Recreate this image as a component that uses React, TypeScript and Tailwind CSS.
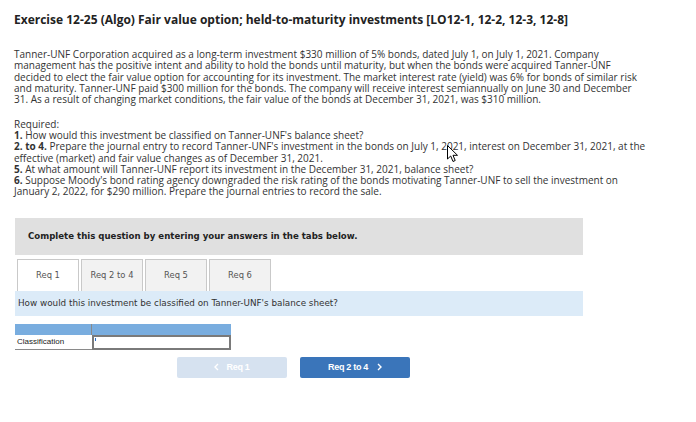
import React from "react";

const body = "font-['Open_Sans',_'Liberation_Sans',_sans-serif] text-[#333]";
const verdana = "font-['DejaVu_Sans',_Verdana,_sans-serif]";

const tabs = ["Req 1", "Req 2 to 4", "Req 5", "Req 6"];

export default function App() {
  return (
    <div className="relative h-[422px] w-[696px] overflow-hidden bg-white">
      <div className={`${body} px-[14px] pt-[13px]`}>
        <h1 className="text-[12px] font-bold leading-[14px] text-[#222]">
          Exercise 12-25 (Algo) Fair value option; held-to-maturity investments [LO12-1, 12-2, 12-3, 12-8]
        </h1>
        <p className="mt-[22px] text-[10px] leading-[11.25px]">
          Tanner-UNF Corporation acquired as a long-term investment $330 million of 5% bonds, dated July 1, on July 1, 2021. Company
          <br />
          management has the positive intent and ability to hold the bonds until maturity, but when the bonds were acquired Tanner-UNF
          <br />
          decided to elect the fair value option for accounting for its investment. The market interest rate (yield) was 6% for bonds of similar risk
          <br />
          and maturity. Tanner-UNF paid $300 million for the bonds. The company will receive interest semiannually on June 30 and December
          <br />
          31. As a result of changing market conditions, the fair value of the bonds at December 31, 2021, was $310 million.
        </p>
        <div className="mt-[14px] text-[10px] leading-[11.1px]">
          <p>Required:</p>
          <p>
            <b>1.</b> How would this investment be classified on Tanner-UNF's balance sheet?
          </p>
          <p>
            <b>2. to 4.</b> Prepare the journal entry to record Tanner-UNF's investment in the bonds on July 1, 2021, interest on December 31, 2021, at the
            <br />
            effective (market) and fair value changes as of December 31, 2021.
          </p>
          <p>
            <b>5.</b> At what amount will Tanner-UNF report its investment in the December 31, 2021, balance sheet?
          </p>
          <p>
            <b>6.</b> Suppose Moody's bond rating agency downgraded the risk rating of the bonds motivating Tanner-UNF to sell the investment on
            <br />
            January 2, 2022, for $290 million. Prepare the journal entries to record the sale.
          </p>
        </div>
      </div>

      <div className={`${verdana} ml-[15px] mt-[21px] w-[568px]`}>
        <div className="flex h-[37px] items-center bg-[#e0e0e0] pl-[13px]">
          <span className="text-[8.6px] font-bold text-[#222]">
            Complete this question by entering your answers in the tabs below.
          </span>
        </div>

        <div className="mt-[4px] flex gap-[2px] pl-[2px]">
          {tabs.map((t, i) => (
            <div
              key={t}
              className={`flex h-[32px] w-[62px] items-center justify-center border border-b-0 border-[#c9c9c9] text-[8.4px] text-[#555] ${
                i === 0 ? "bg-white" : "bg-[#f2f2f2]"
              }`}
            >
              {t}
            </div>
          ))}
        </div>

        <div className="flex h-[25px] items-center bg-[#dcebf8] pl-[3px] text-[8.8px] text-[#333]">
          How would this investment be classified on Tanner-UNF's balance sheet?
        </div>

        <div className="mt-[8px] w-[216px] font-['Liberation_Sans',_Arial,_sans-serif]">
          <div className="flex h-[11px] bg-[#79addf]">
            <div className="w-[77px] border-r border-[#8a8a8a]" />
            <div className="flex-1" />
          </div>
          <div className="flex h-[15px]">
            <div className="flex w-[77px] items-center border-b border-[#8a8a8a] pl-[2px] text-[8px] text-[#222]">
              Classification
            </div>
            <div className="relative flex-1 border-2 border-[#7a7a7a] bg-white">
              <span className="absolute left-[1px] top-[1px] h-[3px] w-[1px] bg-[#2b6cc4]" />
            </div>
          </div>
        </div>

        <div className="mt-[7px] flex gap-[13px] pl-[162px] font-['Liberation_Sans',_Arial,_sans-serif]">
          <button className="flex h-[21px] w-[110px] items-center justify-center gap-[7px] rounded-[2px] bg-[#d6e2f0] text-[9px] font-bold tracking-[-0.3px] text-white">
            <Chevron dir="left" />
            Req 1
          </button>
          <button className="flex h-[21px] w-[110px] items-center justify-center gap-[9px] rounded-[2px] bg-[#3a75ba] text-[9px] font-bold tracking-[-0.3px] text-white">
            Req 2 to 4
            <Chevron dir="right" />
          </button>
        </div>
      </div>

      <svg
        className="absolute left-[447px] top-[145px]"
        width="12"
        height="18"
        viewBox="0 0 12 18"
      >
        <path
          d="M0.5 0.5 L0.5 14 L3.7 11 L6 16.5 L8.2 15.5 L6 10.3 L10.5 10.3 Z"
          fill="white"
          stroke="black"
          strokeWidth="1"
          strokeLinejoin="round"
        />
      </svg>
    </div>
  );
}

function Chevron({ dir }: { dir: "left" | "right" }) {
  return (
    <svg width="5" height="8" viewBox="0 0 5 8" fill="none">
      <path
        d={dir === "left" ? "M4 1 L1 4 L4 7" : "M1 1 L4 4 L1 7"}
        stroke="white"
        strokeWidth="1.4"
      />
    </svg>
  );
}
